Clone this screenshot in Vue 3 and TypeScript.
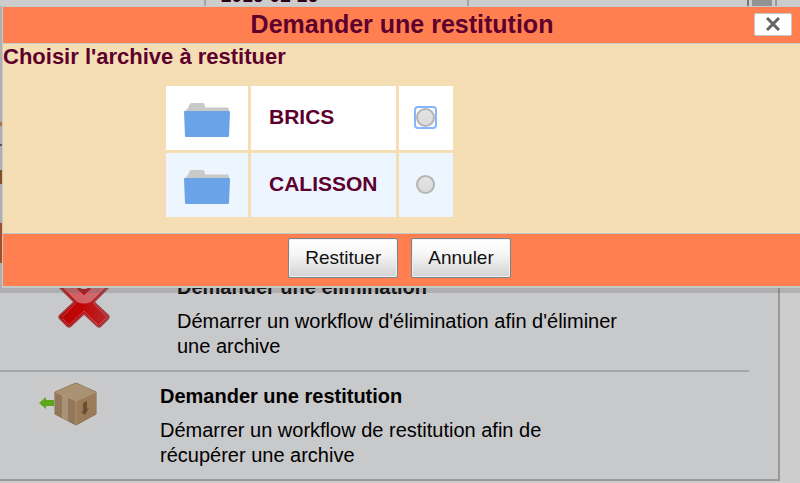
<script setup lang="ts">
import { ref } from 'vue'

interface Archive {
  id: string
  name: string
}

const archives: Archive[] = [
  { id: 'brics', name: 'BRICS' },
  { id: 'calisson', name: 'CALISSON' },
]

const open = ref(true)
const selected = ref<string | null>(null)

function close(): void {
  open.value = false
}
</script>

<template>
  <div class="page">
    <div class="grid-strip">
      <span class="grid-cell"></span>
      <span class="grid-cell date">2016-02-26</span>
      <span class="grid-cell wide"></span>
      <span class="scroll-track"><span class="scroll-thumb"></span></span>
    </div>
    <main class="panel">
      <div class="side-marks">
        <span class="mark amber"></span>
        <span class="mark dark"></span>
        <span class="mark brown"></span>
        <span class="mark orange"></span>
      </div>
      <section class="action first">
        <svg class="cross-icon" viewBox="0 0 54 54" aria-hidden="true">
          <defs>
            <linearGradient id="crossRed" x1="0" y1="0" x2="1" y2="0">
              <stop offset="0" stop-color="#b50707" />
              <stop offset="0.45" stop-color="#c20505" />
              <stop offset="1" stop-color="#b52c30" />
            </linearGradient>
          </defs>
          <path
            d="M12 2 L27 17 L42 2 L52 12 L37 27 L51 40 Q53 42 51 44 L44 51 Q42 53 40 51 L27 39 L14 51 Q12 53 10 51 L3 44 Q1 42 3 40 L17 27 L2 12 Z"
            fill="url(#crossRed)" stroke="#9c454c" stroke-width="1.5" />
          <path d="M5 12 L12 5 L27 20 L42 5 L49 12 L34 27 Q27 30 20 27 Z" fill="#dca0a5" opacity="0.6" />
          <path d="M20 14 H34 L27 20 Z" fill="#b01118" />
          <path d="M5 42 L19 28 M36 28 L50 42 L42 50 M5 43 L12 50 L27 36 L41 50" fill="none" stroke="#dc7a7e" stroke-width="0.8" opacity="0.65" />
        </svg>
        <div class="action-text">
          <h2>Demander une élimination</h2>
          <p>Démarrer un workflow d'élimination afin d'éliminer<br />une archive</p>
        </div>
      </section>
      <section class="action second">
        <svg class="box-icon" viewBox="0 0 62 48" aria-hidden="true">
          <rect width="62" height="48" fill="#cacaca" />
          <path d="M2 23 L9 17 V20 H17 V26 H9 V29 Z" fill="#5da51b" />
          <path d="M39 3 L59 12 V34 L39 45 L18 34 V12 Z" fill="#967a59" stroke="#79654e" />
          <path d="M39 3 L59 12 L39 21 L18 12 Z" fill="#aa9271" />
          <path d="M18 12 L39 21 V45 L18 34 Z" fill="#927758" />
          <path d="M39 21 L59 12 V34 L39 45 Z" fill="#9c7c58" />
          <path d="M25 15 L46 6 L52 9 L31 18 V41 L25 38 Z" fill="#a99276" />
          <path d="M18 12 L39 21 L59 12 M39 21 V45" fill="none" stroke="#b3a084" stroke-width="0.7" />
          <path d="M46 23 L50 21 V29 L52 28 L48 35 L44 32 L46 31 Z" fill="#6b4f34" />
        </svg>
        <div class="action-text">
          <h2>Demander une restitution</h2>
          <p>Démarrer un workflow de restitution afin de<br />récupérer une archive</p>
        </div>
      </section>
    </main>

    <form v-if="open" class="dialog" role="dialog" aria-labelledby="dialog-title" @submit.prevent="close">
      <header class="dialog-head">
        <h1 id="dialog-title">Demander une restitution</h1>
        <button class="close" type="button" aria-label="Fermer" @click="close">
          <svg viewBox="0 0 14 14" aria-hidden="true">
            <path d="M1 1 L13 13 M13 1 L1 13" stroke="#646464" stroke-width="3" />
          </svg>
        </button>
      </header>
      <div class="dialog-body">
        <h2 class="prompt">Choisir l'archive à restituer</h2>
        <table class="archives">
          <tbody>
            <tr v-for="archive in archives" :key="archive.id">
              <td class="folder-cell">
                <svg class="folder" viewBox="0 0 48 36" aria-hidden="true">
                  <path d="M2 9 L5 6 L7 1.5 Q7.500 1 8.500 1 H20 Q21 1 21.500 2 L22 5.500 H44 Q46 5.500 46 7.500 V12 H2 Z" fill="#c9c9c9" />
                  <path d="M1 9.500 Q1 9 2 9 H46 Q47 9 47 10 L46 34 Q46 35 45 35 H3 Q2 35 2 34 Z" fill="#6aa3e8" />
                </svg>
              </td>
              <td class="name-cell"><label :for="archive.id">{{ archive.name }}</label></td>
              <td class="radio-cell">
                <span class="ring" :class="{ focused: archive.id === 'brics' }">
                  <input :id="archive.id" v-model="selected" type="radio" name="archive" :value="archive.id" />
                </span>
              </td>
            </tr>
          </tbody>
        </table>
      </div>
      <footer class="dialog-foot">
        <button class="btn" type="submit">Restituer</button>
        <button class="btn" type="button" @click="close">Annuler</button>
      </footer>
    </form>
  </div>
</template>

<style>
body {
  margin: 0;
  background: #cccccc;
}
</style>

<style scoped>
* {
  box-sizing: border-box;
}

.page {
  position: relative;
  min-height: 100vh;
  overflow: hidden;
  font-family: "Liberation Sans", Arial, sans-serif;
  font-size: 20px;
  color: #000;
  background: #cccccc;
}

h1,
h2,
p {
  margin: 0;
}

.grid-strip {
  display: flex;
  height: 8px;
  padding-right: 23px;
}

.grid-cell {
  flex: 0 0 206px;
  border-right: 2px solid #a4a4a4;
}

.date {
  display: flex;
  flex-basis: 263px;
  align-items: flex-end;
  padding: 0 0 2px 15px;
  font-size: 19px;
  font-weight: bold;
  line-height: 20px;
  color: #2e0018;
}

.wide {
  flex: 1;
  border: 0;
}

.scroll-track {
  width: 30px;
  padding: 0 3px;
  border-left: 2px solid #777;
  border-right: 2px solid #999;
}

.scroll-thumb {
  display: block;
  height: 8px;
  background: #929292;
}

.panel {
  display: flex;
  flex-direction: column;
  margin-right: 20px;
  background: #c8c9cb;
  border-right: 2px solid #999;
  border-bottom: 2px solid #999;
}

.side-marks {
  display: flex;
  flex-direction: column;
  width: 2px;
  height: 267px;
  padding-top: 114px;
}

.mark {
  margin-bottom: 18px;
  flex: 0 0 4px;
  background: #bd7f43;
}

.mark.dark {
  flex-basis: 2px;
  margin-bottom: 24px;
  background: #555;
}

.mark.brown {
  flex-basis: 14px;
  margin-bottom: 39px;
  background: #8f4c0d;
}

.mark.orange {
  flex-basis: 40px;
  margin: 0;
  background: #b84b0c;
}

.action {
  display: flex;
  align-items: flex-start;
  margin-right: 29px;
}

.action h2 {
  font-size: 20px;
  line-height: 24px;
}

.action p {
  margin-top: 10px;
  line-height: 25px;
}

.first {
  padding-bottom: 11px;
  border-bottom: 2px solid #a6a7a9;
}

.second {
  padding: 12px 0 11px;
}

.cross-icon {
  flex: none;
  width: 54px;
  height: 54px;
  margin: 0 66px 0 57px;
}

.box-icon {
  flex: none;
  width: 62px;
  height: 48px;
  margin: -4px 61px 0 37px;
}

.dialog {
  position: absolute;
  top: 6px;
  left: 2px;
  right: 0;
  color: #5d002e;
  background: #f5deb3;
  border: 1px solid #c5c9c9;
  border-right: 0;
  border-bottom-width: 2px;
  box-shadow: 0 0 0 5px rgba(100, 100, 100, 0.25);
  clip-path: inset(0 0 -5px -2px);
}

.dialog-head {
  display: grid;
  grid-template-columns: 1fr auto 1fr;
  align-items: center;
  height: 37px;
  padding: 0 8px 2px 9px;
  background: #ff7f50;
  border-bottom: 1px solid #c5c9c9;
}

.dialog-head h1 {
  grid-column: 2;
  font-size: 25px;
  line-height: 32px;
}

.close {
  display: flex;
  align-items: center;
  justify-content: center;
  justify-self: end;
  width: 38px;
  height: 23px;
  padding: 0;
  background: #fff;
  border: 1px solid #c5c9cc;
  border-radius: 2px;
}

.close svg {
  width: 14px;
  height: 14px;
}

.dialog-body {
  padding-bottom: 13px;
}

.prompt {
  font-size: 22px;
  line-height: 26px;
}

.archives {
  margin: 13px 0 0 160px;
  border-collapse: separate;
  border-spacing: 3px;
}

.archives td {
  height: 64px;
  padding: 0;
  background: #fff;
}

.archives tr:nth-child(2) td {
  background: #edf5ff;
}

.archives .folder-cell {
  width: 82px;
  padding-top: 3px;
  text-align: center;
}

.folder {
  display: inline-block;
  width: 48px;
  height: 36px;
  vertical-align: middle;
}

.archives .name-cell {
  padding: 0 18px 2px 18px;
  font-size: 21px;
  font-weight: bold;
}

.archives .radio-cell {
  width: 54px;
  padding-bottom: 2px;
}

.ring {
  display: flex;
  align-items: center;
  justify-content: center;
  width: 23px;
  height: 23px;
  margin: 0 auto;
  border: 2px solid transparent;
  border-radius: 4px;
}

.ring.focused {
  border-color: #86b5ff;
}

.ring input {
  appearance: none;
  width: 19px;
  height: 19px;
  margin: 0;
  background: linear-gradient(#e4e4e4, #dadada);
  border: 2px solid #b4b4b4;
  border-radius: 50%;
  outline: 0;
}

.ring input:checked {
  background: radial-gradient(circle, #555 35%, #e0e0e0 40%);
}

.dialog-foot {
  display: flex;
  justify-content: center;
  gap: 13px;
  padding: 4px 4px 8px 0;
  background: #ff7f50;
  border-top: 1px solid #c5c9c9;
}

.btn {
  height: 40px;
  padding: 0 16px;
  font: 19px "Liberation Sans", Arial, sans-serif;
  color: #111;
  background: linear-gradient(#fff, #f6f6f6 40%, #d2d2d4);
  border: 1px solid #78858b;
  border-radius: 2px;
  box-shadow: inset 0 0 0 1px #f0f0f0;
}
</style>
